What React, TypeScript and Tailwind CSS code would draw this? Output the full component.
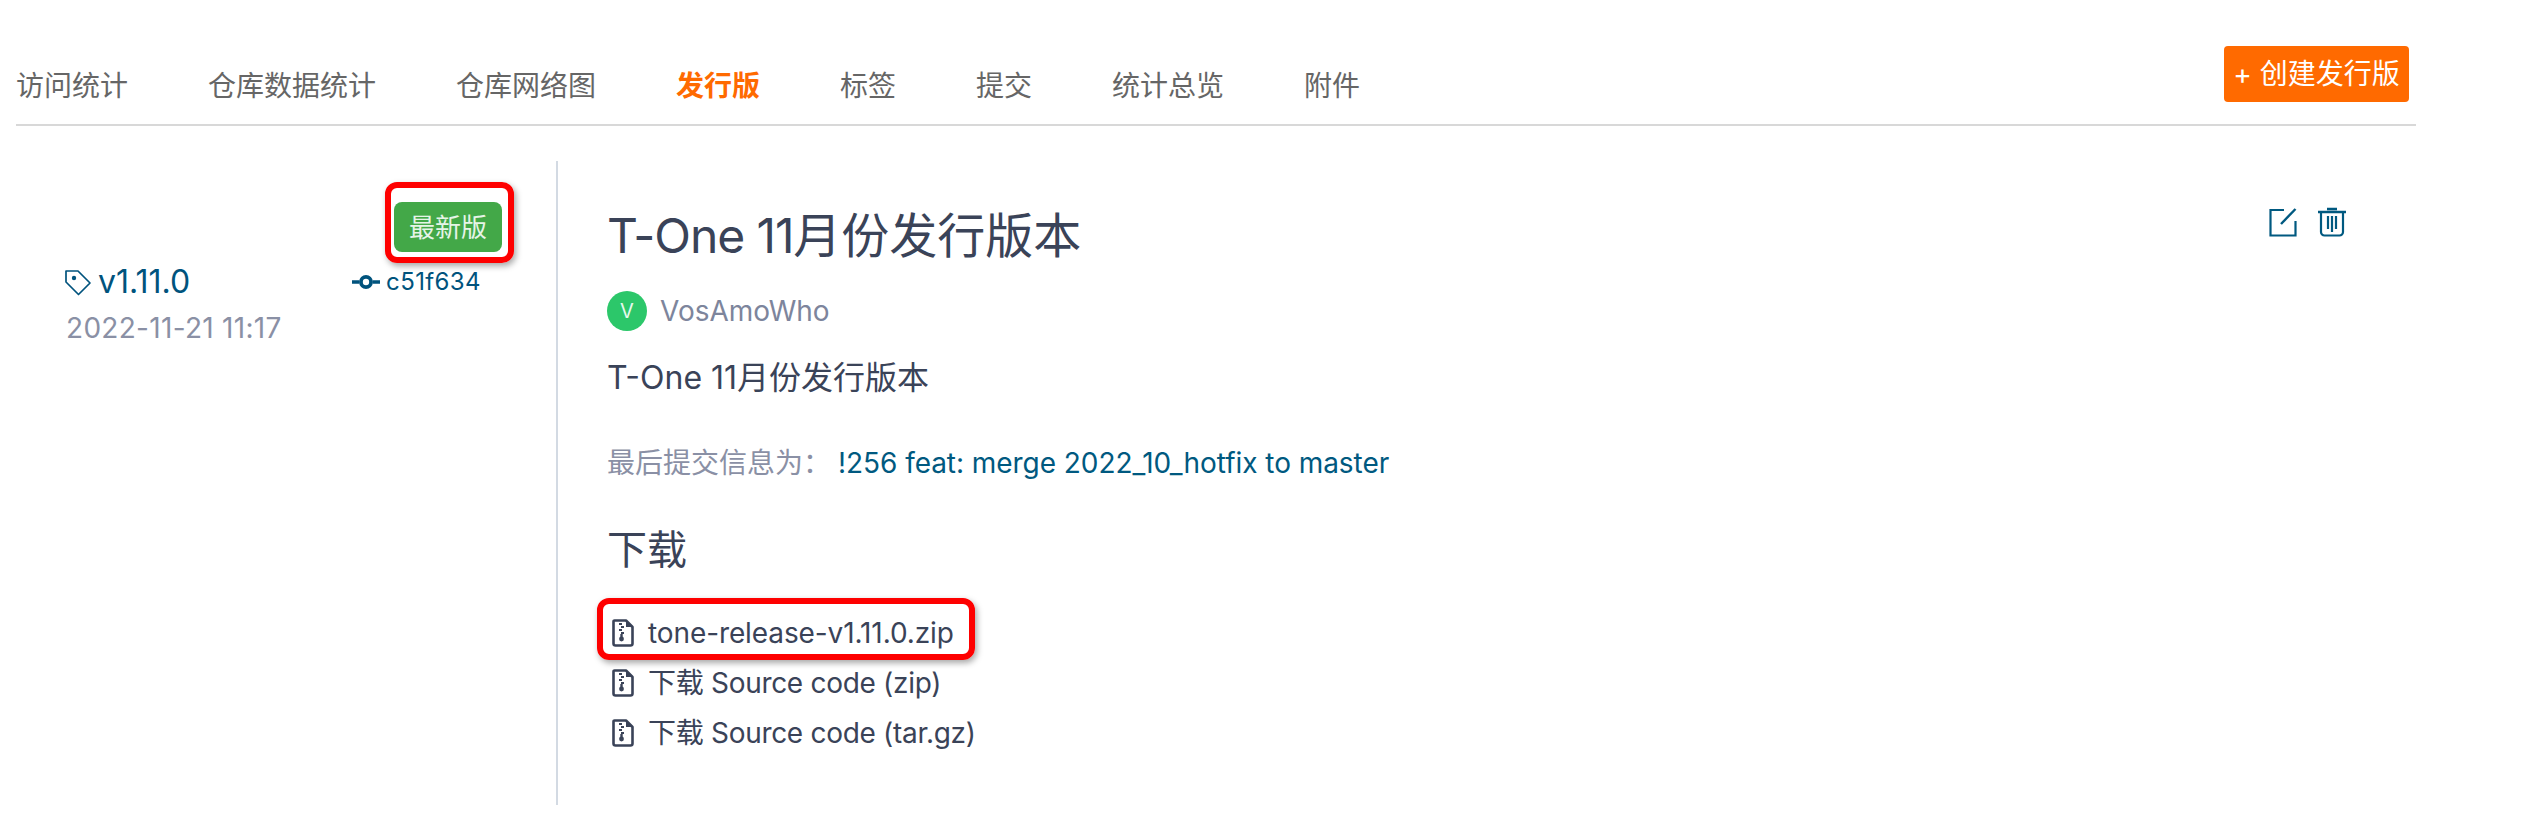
import React from "react";

const FONT = "[font-family:Inter,'Noto_Sans_CJK_SC',sans-serif]";

const tabs = ["访问统计", "仓库数据统计", "仓库网络图", "发行版", "标签", "提交", "统计总览", "附件"];

function ZipIcon() {
  return (
    <svg width="22" height="28" viewBox="0 0 22 28" fill="none" className="shrink-0">
      <path d="M2.5 1.5H14L20.5 8V24.5a2 2 0 0 1-2 2H3.5a2 2 0 0 1-2-2V2.5a1 1 0 0 1 1-1Z" stroke="#3a4358" strokeWidth="2.6" strokeLinejoin="round" />
      <path d="M14 2v6h6.5" fill="#3a4358" />
      <path d="M7 5h3M9 8h3M7 11h3M9 14h3" stroke="#3a4358" strokeWidth="1.8" />
      <circle cx="9.5" cy="20" r="2.4" fill="#3a4358" />
      <path d="M9.5 15v3" stroke="#3a4358" strokeWidth="2.4" />
    </svg>
  );
}

function FileRow({ children, className = "" }: { children: React.ReactNode; className?: string }) {
  return (
    <div className={`flex h-[50px] items-center gap-[14px] pl-[5px] text-[28px] text-[#3a4358] ${className}`}>
      <ZipIcon />
      <span>{children}</span>
    </div>
  );
}

export default function App() {
  return (
    <div className={`relative h-[824px] w-[2522px] overflow-hidden bg-white pl-4 ${FONT}`}>
      <div className="flex h-[126px] w-[2400px] items-start justify-between border-b-2 border-[#d8d8d8]">
        <div className="flex gap-[80px] pt-[66px] text-[28px] leading-[40px] text-[#666666]">
          {tabs.map((t) => (
            <span key={t} className={t === "发行版" ? "font-bold text-[#ff6a00]" : ""}>
              {t}
            </span>
          ))}
        </div>
        <button className="mr-[7px] mt-[46px] h-[56px] w-[185px] whitespace-nowrap rounded-[4px] bg-[#ff6a00] text-[28px] leading-[56px] text-white">
          + 创建发行版
        </button>
      </div>

      <div className="mt-[35px] flex h-[644px]">
        <div className="relative w-[542px] shrink-0 border-r-2 border-[#d3dae3]">
          <div className="flex justify-end pr-[54px] pt-[41px]">
            <div className="relative flex h-[50px] w-[108px] items-center justify-center rounded-[8px] bg-[#43a848] text-[26px] text-[#e6f4e7]">
              最新版
              <div className="absolute -bottom-[11px] -left-[9px] -right-[12px] -top-[20px] rounded-[12px] border-[6px] border-[#fe0000] shadow-[2px_3px_6px_rgba(0,0,0,0.35)]" />
            </div>
          </div>
          <div className="mt-[10px] flex items-center pl-[48px] pr-[75px]">
            <svg width="28" height="28" viewBox="0 0 28 28" fill="none" className="shrink-0">
              <path d="M2 3h12l12 12-11.5 11.5L2 14V3Z" stroke="#00537d" strokeWidth="1.7" strokeLinejoin="round" />
              <circle cx="10" cy="10" r="2.2" fill="#00537d" />
            </svg>
            <span className="ml-[6px] text-[32px] leading-[40px] text-[#00537d]">v1.11.0</span>
            <svg width="28" height="16" viewBox="0 0 30 16" fill="none" className="ml-auto shrink-0">
              <path d="M0 8h8M22 8h8" stroke="#00537d" strokeWidth="4" />
              <circle cx="15" cy="8" r="5.4" stroke="#00537d" strokeWidth="4" />
            </svg>
            <span className="ml-[6px] text-[24px] leading-[40px] tracking-[0.4px] text-[#00537d]">c51f634</span>
          </div>
          <div className="mt-[8px] pl-[50px] text-[28px] leading-[36px] tracking-[0.3px] text-[#8a90a5]">2022-11-21 11:17</div>
        </div>

        <div className="relative flex-1 pl-[49px]">
          <div className="absolute left-[1711px] top-[46px] flex gap-[21px]">
            <svg width="28" height="30" viewBox="0 0 28 30" fill="none">
              <path d="M15 3H1.5v25.5h25V14" stroke="#005980" strokeWidth="2.2" />
              <path d="M12 17 26.5 2" stroke="#005980" strokeWidth="2.4" />
            </svg>
            <svg width="28" height="30" viewBox="0 0 28 30" fill="none">
              <path d="M0 5h28M9 2h10" stroke="#005980" strokeWidth="2.4" />
              <path d="M3 5v20a3.5 3.5 0 0 0 3.5 3.5h15A3.5 3.5 0 0 0 25 25V5M10 9v13M14 9v16M18 9v13" stroke="#005980" strokeWidth="2.2" />
            </svg>
          </div>
          <div className="pt-[43px] text-[48px] leading-[64px] text-[#3a4358]">
            <span className="tracking-[-1.1px]">T-One 11</span>月份发行版本
          </div>
          <div className="mt-[22px] flex items-center gap-[13px]">
            <div className="flex h-[40px] w-[40px] items-center justify-center rounded-full bg-[#2cc76a] text-[20px] text-[#e6f8ed]">V</div>
            <span className="text-[28px] text-[#7d859c]">VosAmoWho</span>
          </div>
          <div className="mt-[23px] text-[32px] leading-[46px] text-[#3a4358]">T-One 11月份发行版本</div>
          <div className="mt-[42px] flex text-[28px] leading-[40px]">
            <span className="w-[231px] text-[#8a90a5]">最后提交信息为：</span>
            <span className="tracking-[-0.05px] text-[#005980]">!256 feat: merge 2022_10_hotfix to master</span>
          </div>
          <div className="mt-[39px] text-[40px] leading-[56px] text-[#3a4358]">下载</div>
          <div className="relative mt-[30px]">
            <FileRow className="tracking-[-0.1px]">tone-release-v1.11.0.zip</FileRow>
            <div className="absolute -top-[10px] left-[-10px] h-[62px] w-[378px] rounded-[12px] border-[6px] border-[#fe0000] shadow-[2px_3px_6px_rgba(0,0,0,0.35)]" />
            <FileRow className="tracking-[-0.3px]">下载 Source code (zip)</FileRow>
            <FileRow className="tracking-[-0.3px]">下载 Source code (tar.gz)</FileRow>
          </div>
        </div>
      </div>
    </div>
  );
}
